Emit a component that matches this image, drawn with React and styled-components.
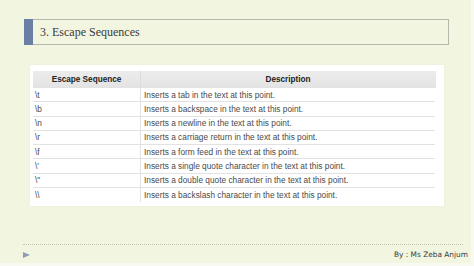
import React from "react";
import styled, { createGlobalStyle } from "styled-components";

const Global = createGlobalStyle`
  html, body { margin: 0; padding: 0; background: #f8faef; }
  #root { width: 474px; height: 266px; overflow: hidden; }
`;

const Page = styled.div`
  width: 474px;
  height: 266px;
  background: #f8faef;
`;

const Slide = styled.div`
  width: 471px;
  height: 263px;
  background: #f2f6e1;
  box-sizing: border-box;
  padding: 19px 0 0 24px;
  display: flex;
  flex-direction: column;
`;

const TitleBox = styled.div`
  width: 425px;
  height: 26px;
  box-sizing: border-box;
  border: 1px solid #b5b8aa;
  border-left: none;
  display: flex;
  align-items: center;
`;

const Accent = styled.div`
  width: 9px;
  align-self: stretch;
  margin-top: -1px;
  margin-bottom: -1px;
  background: #6a7ea6;
`;

const Title = styled.h1`
  margin: 0 0 0 7px;
  font-family: "Liberation Serif", "Times New Roman", serif;
  font-weight: normal;
  font-size: 12px;
  color: #3a3a3a;
`;

const Panel = styled.div`
  margin: 20px 0 0 6px;
  width: 414px;
  height: 141px;
  box-sizing: border-box;
  background: #ffffff;
  padding: 6px 8px 5px 3px;
  box-shadow: 0 0 1px rgba(0, 0, 0, 0.08);
`;

const Table = styled.table`
  width: 403px;
  border-collapse: collapse;
  font-family: "Liberation Sans", Arial, sans-serif;
  font-size: 8.3px;
  color: #4a4a4a;
  table-layout: fixed;
`;

const Head = styled.th`
  height: 16px;
  padding: 0;
  background: linear-gradient(#ececec, #e4e4e4);
  color: #222;
  font-weight: bold;
  font-size: 8.2px;
  text-align: center;
  border-right: 1px solid ${(p) => (p.$last ? "transparent" : "#dcdcdc")};
  width: ${(p) => p.$w};
`;

const Cell = styled.td`
  height: 14.25px;
  box-sizing: border-box;
  padding: 0 0 0 ${(p) => p.$pad};
  border-top: 1px solid #e2e2e2;
  border-right: 1px solid ${(p) => (p.$last ? "transparent" : "#e2e2e2")};
  white-space: nowrap;
`;

const Footer = styled.div`
  margin-top: 38px;
  margin-left: -1px;
  width: 440px;
  border-top: 1px dotted #c4c7b6;
  display: flex;
  align-items: center;
  justify-content: space-between;
  padding-top: 4px;
`;

const Play = styled.div`
  width: 0;
  height: 0;
  border-top: 3.5px solid transparent;
  border-bottom: 3.5px solid transparent;
  border-left: 7px solid #8e9cb3;
  margin-top: 2px;
`;

const Credit = styled.span`
  font-family: "DejaVu Sans", Tahoma, Verdana, sans-serif;
  font-size: 7.4px;
  color: #3a3a3a;
  margin-right: -5px;
  margin-top: 1px;
`;

const rows = [
  ["\\t", "Inserts a tab in the text at this point."],
  ["\\b", "Inserts a backspace in the text at this point."],
  ["\\n", "Inserts a newline in the text at this point."],
  ["\\r", "Inserts a carriage return in the text at this point."],
  ["\\f", "Inserts a form feed in the text at this point."],
  ["\\'", "Inserts a single quote character in the text at this point."],
  ['\\"', "Inserts a double quote character in the text at this point."],
  ["\\\\", "Inserts a backslash character in the text at this point."],
];

export default function App() {
  return (
    <>
      <Global />
      <Page>
        <Slide>
          <TitleBox>
            <Accent />
            <Title>3. Escape Sequences</Title>
          </TitleBox>
          <Panel>
            <Table>
              <thead>
                <tr>
                  <Head $w="107px">Escape Sequence</Head>
                  <Head $last>Description</Head>
                </tr>
              </thead>
              <tbody>
                {rows.map(([k, d]) => (
                  <tr key={k}>
                    <Cell $pad="2px">{k}</Cell>
                    <Cell $pad="3px" $last>{d}</Cell>
                  </tr>
                ))}
              </tbody>
            </Table>
          </Panel>
          <Footer>
            <Play />
            <Credit>By : Ms Zeba Anjum</Credit>
          </Footer>
        </Slide>
      </Page>
    </>
  );
}
